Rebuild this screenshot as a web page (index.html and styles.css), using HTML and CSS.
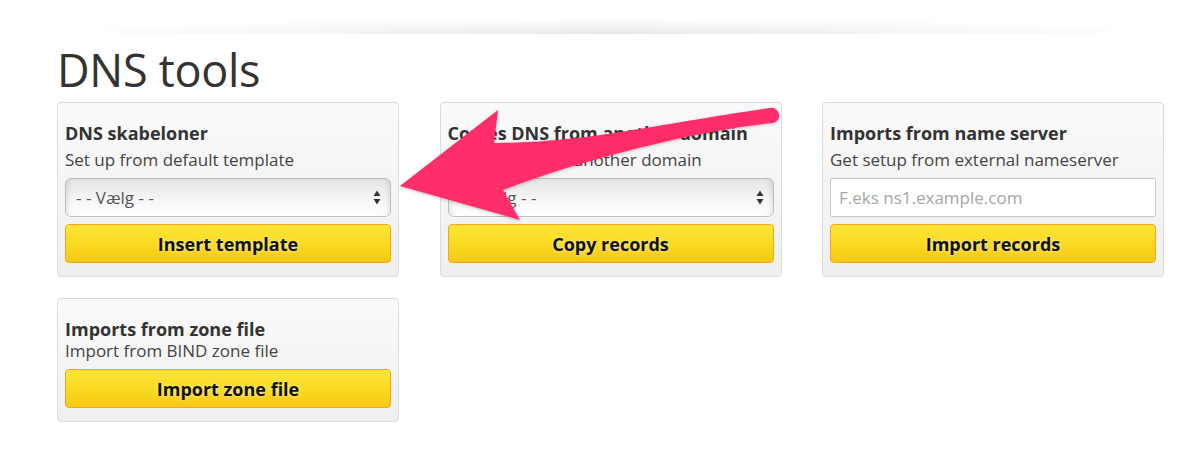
FILE: index.html
```html
<!DOCTYPE html>
<html lang="da">
<head>
<meta charset="utf-8">
<title>DNS tools</title>
<link rel="stylesheet" href="styles.css">
</head>
<body>
<div class="page">
  <div class="topshadow"></div>
  <main class="content">
    <h1 class="title">DNS tools</h1>
    <div class="grid">
      <section class="card">
        <h2 class="card-title">DNS skabeloner</h2>
        <p class="card-sub">Set up from default template</p>
        <div class="select-wrap">
          <select class="select"><option>- - Vælg - -</option></select>
          <svg class="select-arrows" width="8" height="15" viewBox="0 0 8 15"><path d="M4 0.5 L7.5 6 H0.5 Z M4 14.5 L7.5 9 H0.5 Z" fill="#333"/></svg>
        </div>
        <button class="btn">Insert template</button>
      </section>
      <section class="card">
        <h2 class="card-title">Copies DNS from another domain</h2>
        <p class="card-sub">Copy DNS from another domain</p>
        <div class="select-wrap">
          <select class="select"><option>- - Vælg - -</option></select>
          <svg class="select-arrows" width="8" height="15" viewBox="0 0 8 15"><path d="M4 0.5 L7.5 6 H0.5 Z M4 14.5 L7.5 9 H0.5 Z" fill="#333"/></svg>
        </div>
        <button class="btn">Copy records</button>
      </section>
      <section class="card">
        <h2 class="card-title">Imports from name server</h2>
        <p class="card-sub">Get setup from external nameserver</p>
        <input class="input" type="text" placeholder="F.eks ns1.example.com">
        <button class="btn">Import records</button>
      </section>
      <section class="card card-short">
        <h2 class="card-title">Imports from zone file</h2>
        <p class="card-sub card-sub-tight">Import from BIND zone file</p>
        <button class="btn">Import zone file</button>
      </section>
    </div>
  </main>
  <svg class="annot-arrow" width="1200" height="465" viewBox="0 0 1200 465">
    <defs>
      <filter id="sh" x="-10%" y="-20%" width="120%" height="140%">
        <feDropShadow dx="0" dy="1" stdDeviation="1.5" flood-color="#000" flood-opacity="0.25"/>
      </filter>
    </defs>
    <path d="M400 186 L498 110 L494 143 C590 142 640 127 770 108 A7.6 7.6 0 0 1 773 123 C700 130 580 160 503 190 L520 220 Z" fill="#ff2d6b" filter="url(#sh)"/>
  </svg>
</div>
</body>
</html>
```
FILE: styles.css
```css
* { box-sizing: border-box; }
html, body { margin: 0; padding: 0; background: #fff; }
body {
  font-family: "Open Sans", "Liberation Sans", Arial, sans-serif;
  color: #333;
  width: 1200px;
  height: 465px;
  overflow: hidden;
}
.page { position: relative; width: 1200px; height: 465px; padding-top: 18px; }
.topshadow {
  margin: 0 30px 0 50px;
  height: 16px;
  background: radial-gradient(ellipse 50% 100% at 50% 100%, rgba(0,0,0,0.09), rgba(0,0,0,0.03) 60%, rgba(0,0,0,0) 100%);
}
.content { padding: 0 0 0 57px; }
.title {
  margin: 11px 0 7px 0;
  font-size: 45px;
  font-weight: 400;
  line-height: 50px;
  color: #333;
  letter-spacing: -0.3px;
}
.grid {
  display: grid;
  grid-template-columns: repeat(3, 342px);
  column-gap: 40.5px;
  row-gap: 21px;
  align-items: start;
}
.card {
  border: 1px solid #dcdcdc;
  border-radius: 4px;
  background: linear-gradient(#fafafa, #efefef);
  padding: 18px 7px 13px 7px;
  display: flex;
  flex-direction: column;
}
.card-title {
  margin: 0;
  font-size: 18px;
  font-weight: 700;
  line-height: 24px;
  color: #333;
  white-space: nowrap;
}
.card-sub {
  margin: 4px 0 7px 0;
  font-size: 17px;
  line-height: 22px;
  color: #444;
  white-space: nowrap;
}
.card-sub-tight { margin: 0 0 8px 0; line-height: 20px; }
.select-wrap { position: relative; height: 39px; margin-bottom: 7px; }
.select {
  -webkit-appearance: none;
  appearance: none;
  width: 100%;
  height: 39px;
  border: 1px solid #bdbdbd;
  border-radius: 6px;
  background: linear-gradient(#e4e4e4, #f6f6f6 55%, #ffffff);
  box-shadow: inset 6px 0 6px -5px rgba(0,0,0,0.12), inset -6px 0 6px -5px rgba(0,0,0,0.12), 0 1px 0 rgba(255,255,255,0.8);
  font-family: "Open Sans", "Liberation Sans", Arial, sans-serif;
  font-size: 17px;
  color: #555;
  padding: 0 0 0 10px;
  margin: 0;
  outline: none;
}
.select-arrows { position: absolute; right: 10px; top: 12px; }
.input {
  width: 100%;
  height: 39px;
  border: 1.5px solid #c8c8c8;
  border-radius: 2px;
  background: #fff;
  font-family: "Open Sans", "Liberation Sans", Arial, sans-serif;
  font-size: 17px;
  color: #333;
  padding: 0 0 0 8px;
  margin: 0 0 7px 0;
  outline: none;
}
.input::placeholder { color: #a6a6a6; }
.btn {
  width: 100%;
  height: 39px;
  margin: 0;
  border: 1px solid #f5a521;
  border-radius: 4px;
  background: linear-gradient(#fde638, #f9d81f 55%, #f6c915);
  font-family: "Open Sans", "Liberation Sans", Arial, sans-serif;
  font-size: 18px;
  font-weight: 700;
  color: #111;
  text-shadow: 0 0 4px rgba(255,255,255,0.6);
  cursor: pointer;
  padding: 0;
}
.annot-arrow { position: absolute; left: 0; top: 0; pointer-events: none; }
```
